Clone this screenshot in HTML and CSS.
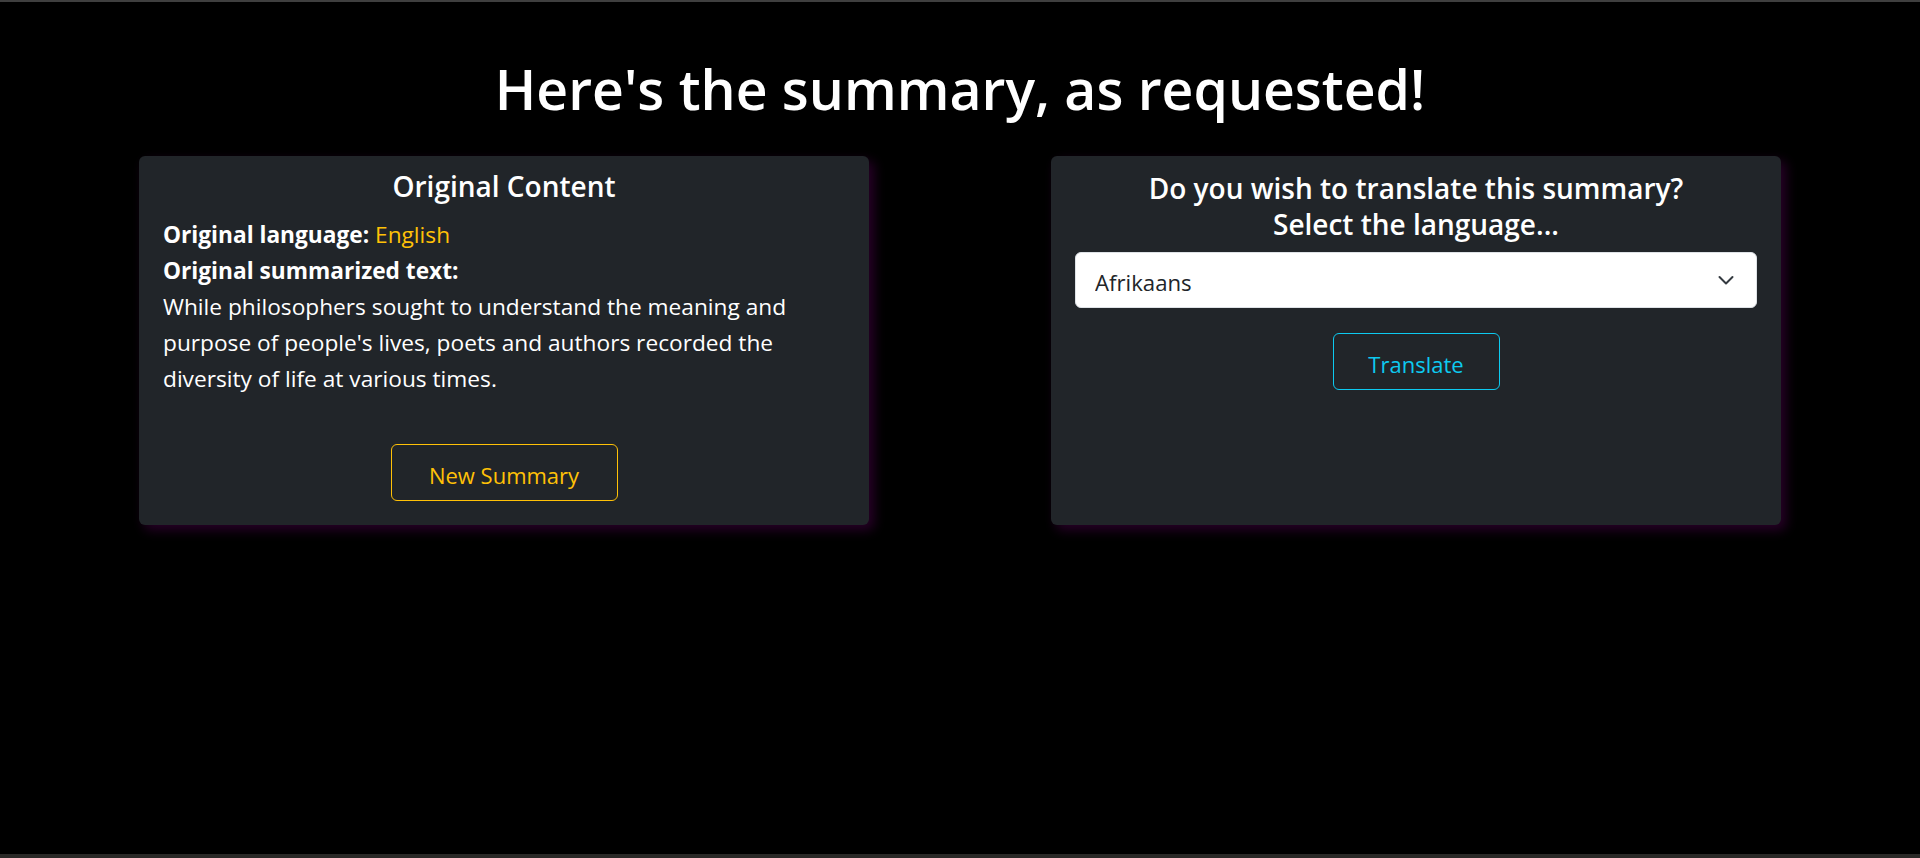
FILE: index.html
```html
<!DOCTYPE html>
<html lang="en">
<head>
<meta charset="utf-8">
<title>Summary</title>
<link rel="stylesheet" href="styles.css">
</head>
<body>
<div class="topline"></div>
<main class="page">
  <h1 class="page-title">Here's the summary, as requested!</h1>
  <div class="cards">
    <section class="card card-original">
      <h3 class="card-title">Original Content</h3>
      <p class="card-text"><strong>Original language:</strong> <span class="lang">English</span><br><strong>Original summarized text:</strong><br>While philosophers sought to understand the meaning and purpose of people's lives, poets and authors recorded the diversity of life at various times.</p>
      <div class="actions">
        <button class="btn btn-warning" type="button">New Summary</button>
      </div>
    </section>
    <section class="card card-translate">
      <h3 class="card-subtitle">Do you wish to translate this summary?<br>Select the language...</h3>
      <div class="select-wrap">
        <select class="lang-select">
          <option>Afrikaans</option>
        </select>
        <svg class="chevron" width="16" height="16" viewBox="0 0 16 16"><path d="M1.5 5L8 11.5L14.5 5" fill="none" stroke="#343a40" stroke-width="2" stroke-linecap="round" stroke-linejoin="round"/></svg>
      </div>
      <div class="actions actions-top">
        <button class="btn btn-info" type="button">Translate</button>
      </div>
    </section>
  </div>
</main>
<div class="bottomline"></div>
</body>
</html>
```

FILE: styles.css
```css
html, body {
  margin: 0;
  padding: 0;
}
body {
  background: #000;
  color: #fff;
  font-family: "Open Sans", "Noto Sans", sans-serif;
  min-height: 100vh;
  display: flex;
  flex-direction: column;
}
.topline {
  height: 2px;
  background: #3f3f3f;
}
.bottomline {
  height: 4px;
  background: #2a2927;
}
.page {
  flex: 1;
}
.page-title {
  margin: 54px 0 34px;
  text-align: center;
  font-size: 55.3px;
  font-weight: 600;
  line-height: 1.2;
}
.cards {
  display: flex;
  justify-content: space-between;
  padding: 0 139px;
}
.card {
  width: 730px;
  height: 369px;
  box-sizing: border-box;
  background: #212529;
  border-radius: 6px;
  padding: 14px 24px 24px;
  box-shadow: 5px 5px 12px rgba(100, 0, 100, 0.4);
  display: flex;
  flex-direction: column;
}
.card-title {
  margin: 0 0 13px;
  text-align: center;
  font-size: 28px;
  font-weight: 600;
  line-height: 33.6px;
}
.card-text {
  margin: 0;
  font-size: 22.7px;
  line-height: 36px;
}
.card-text strong {
  font-weight: 700;
}
.lang {
  color: #ffc107;
}
.actions {
  margin-top: auto;
  display: flex;
  justify-content: center;
}
.actions-top {
  margin-top: 25px;
}
.btn {
  height: 57px;
  box-sizing: border-box;
  background: transparent;
  border: 1px solid;
  border-radius: 6px;
  font-family: inherit;
  font-size: 22px;
  padding: 4px 0 0;
}
.btn-warning {
  width: 227px;
  color: #ffc107;
  border-color: #ffc107;
}
.btn-info {
  width: 167px;
  color: #0dcaf0;
  border-color: #0dcaf0;
}
.card-subtitle {
  margin: 0 0 10px;
  text-align: center;
  font-size: 28px;
  font-weight: 600;
  line-height: 36px;
}
.select-wrap {
  position: relative;
}
.lang-select {
  display: block;
  width: 100%;
  height: 56px;
  box-sizing: border-box;
  -webkit-appearance: none;
  appearance: none;
  background: #fff;
  border: 1px solid #dee2e6;
  border-radius: 6px;
  padding: 5px 48px 0 19px;
  font-family: inherit;
  font-size: 22.2px;
  color: #212529;
}
.chevron {
  position: absolute;
  right: 23px;
  top: 20px;
  pointer-events: none;
}
```
